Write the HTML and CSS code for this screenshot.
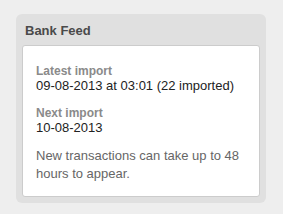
FILE: index.html
```html
<!DOCTYPE html>
<html>
<head>
<meta charset="utf-8">
<link rel="stylesheet" href="styles.css">
</head>
<body>
<div class="page">
  <section class="card">
    <h2 class="card-title">Bank Feed</h2>
    <div class="card-body">
      <div class="field field-first">
        <div class="label">Latest import</div>
        <div class="value">09-08-2013 at 03:01 (22 imported)</div>
      </div>
      <div class="field">
        <div class="label">Next import</div>
        <div class="value">10-08-2013</div>
      </div>
      <p class="note">New transactions can take up to 48 hours to appear.</p>
    </div>
  </section>
</div>
</body>
</html>
```
FILE: styles.css
```css
html, body {
  margin: 0;
  padding: 0;
}
body {
  background: #eeeeee;
  font-family: "Liberation Sans", Arial, sans-serif;
  width: 283px;
  height: 214px;
  overflow: hidden;
}
.page {
  padding: 14px 17px 0 16px;
}
.card {
  background: #e0e0e0;
  border-radius: 6px;
  padding: 0 6px 6px 6px;
}
.card-title {
  margin: 0;
  font-size: 13px;
  font-weight: bold;
  color: #4a4a4a;
  padding: 9px 0 0 3px;
  height: 22px;
  line-height: 16px;
}
.card-body {
  background: #ffffff;
  border: 1px solid #cccccc;
  border-radius: 3px;
  padding: 18px 13px 13px 13px;
}
.field {
  margin-bottom: 11px;
}
.field-first {
  margin-bottom: 12px;
}
.label {
  font-size: 12px;
  font-weight: bold;
  color: #8a8a8a;
  line-height: 14px;
}
.value {
  font-size: 13px;
  color: #222222;
  line-height: 16px;
}
.note {
  margin: 0;
  font-size: 13px;
  color: #666666;
  line-height: 18px;
}
```
